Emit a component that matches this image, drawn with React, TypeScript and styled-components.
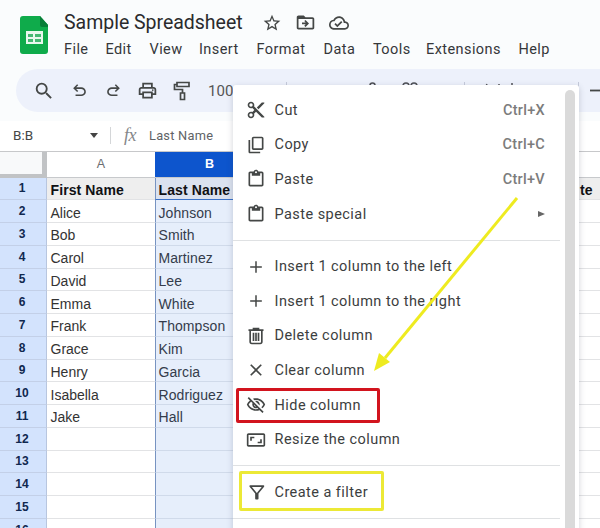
import React from 'react';
import styled, { createGlobalStyle } from 'styled-components';

const Global = createGlobalStyle`
  * { box-sizing: border-box; }
  body { margin: 0; overflow: hidden; background: #f9fbfd; font-family: Roboto, "Liberation Sans", sans-serif; }
`;
const Page = styled.div`position: relative; width: 600px; height: 528px; overflow: hidden; background: #fafcfd; display: flex; flex-direction: column;`;
const Header = styled.header`height: 69px; flex: none; display: flex; padding-left: 20px;`;
const Logo = styled.svg`width: 28px; height: 38px; margin-top: 16px; flex: none;`;
const HeaderText = styled.div`margin-left: 16px; display: flex; flex-direction: column;`;
const TitleRow = styled.div`height: 38px; padding-top: 7px; display: flex; align-items: center;`;
const Title = styled.div`width: 198px; white-space: nowrap; font-size: 19.5px; letter-spacing: -0.02px; color: #2a2b2d;`;
const TitleIcons = styled.div`display: flex; gap: 13px; align-items: center;`;
const MenuBar = styled.nav`display: flex; height: 22px; align-items: center;`;
const MenuName = styled.span<{ $w: number }>`width: ${p => p.$w}px; flex: none; font-size: 14.5px; letter-spacing: 0.42px; color: #35373a; white-space: nowrap;`;
const Toolbar = styled.div`height: 43px; flex: none; margin-left: 16px; padding-left: 17px; border-radius: 22px 0 0 22px; background: #edf1fb; display: flex; align-items: center; color: #444746;`;
const ToolSlot = styled.div<{ $w: number }>`width: ${p => p.$w}px; flex: none; display: flex;`;
const Zoom = styled.span`width: 78px; flex: none; margin-left: 1px; font-size: 15px; letter-spacing: 0.1px; color: #555;`;
const ToolGlyphs = styled.svg`width: 315px; height: 43px; flex: none;`;
const FormulaBar = styled.div`height: 31px; margin-top: 9px; flex: none; display: flex; align-items: center; background: #fff; border-bottom: 1px solid #c7c8ca; padding: 0 0 2px 13px; font-size: 13.5px; color: #444746;`;
const RangeName = styled.span`width: 77px;`;
const Caret = styled.span`width: 0; border: 4.5px solid transparent; border-top: 5px solid #444; border-bottom: 0;`;
const Split = styled.span`width: 1px; height: 17px; margin-left: 12px; background: #d4d6d8;`;
const Fx = styled.span`width: 24px; margin-left: 13px; font: italic 18px "Liberation Serif", serif; letter-spacing: -0.5px; color: #85878a;`;
const FormulaText = styled.span`margin-left: 1px; font-size: 12.8px; letter-spacing: 0.25px; color: #606366;`;
const Sheet = styled.div`flex: none; display: grid; grid-template-columns: 47px 108px 100px 1fr; grid-auto-rows: 22.75px; grid-template-rows: 25.5px; font-family: "Liberation Sans", Arial, sans-serif;`;
const Corner = styled.div`background: #f8f9fa; border-right: 5px solid #c1c3c5; border-bottom: 4px solid #c1c3c5;`;
const ColumnHead = styled.div<{ $active?: boolean }>`display: flex; align-items: center; justify-content: center; font-size: 12.5px; color: ${p => p.$active ? '#fff' : '#6b6d70'}; font-weight: ${p => p.$active ? 700 : 400}; background: ${p => p.$active ? '#0d55cd' : '#fff'}; border-bottom: 1px solid #c7c9cc; padding-left: ${p => p.$active ? 9 : 0}px;`;
const RowHead = styled.div`background: #d3e3fd; border-right: 1px solid #b8c6df; border-bottom: 1px solid #c3d0e8; padding-right: 2px; color: #10284f; font-size: 12px; font-weight: 700; display: flex; align-items: center; justify-content: center;`;
const Cell = styled.div<{ $selected?: boolean; $head?: boolean }>`
  padding-left: ${p => p.$selected ? 2.5 : 3.5}px; padding-top: 3px; display: flex; align-items: center; white-space: nowrap; overflow: hidden;
  font-size: 14px; letter-spacing: ${p => p.$head ? 0.1 : p.$selected ? 0.08 : 0}px; color: ${p => p.$head ? '#101114' : p.$selected ? '#343c4b' : '#333'};
  font-weight: ${p => p.$head ? 700 : 400};
  background: ${p => p.$selected ? (p.$head ? '#dbe2ef' : '#e6eefb') : p.$head ? '#eee' : '#fff'};
  border-bottom: 1px solid ${p => p.$selected ? (p.$head ? '#3a72c8' : '#d0daea') : '#e2e3e5'};
  border-left: ${p => p.$selected ? '1px solid #7793c1' : '0'};
`;
const RestCell = styled(Cell)`padding-left: 325px;`;
const Popup = styled.div`position: absolute; left: 233px; top: 85px; width: 346px; height: 460px; background: #fff; border-radius: 3px; box-shadow: 0 2px 6px rgba(45,55,75,.22); padding-top: 8px;`;
const Item = styled.div`height: 34.6px; display: flex; align-items: center; padding: 0 34px 0 13px; color: #3c3e40; font-size: 14.5px; letter-spacing: .45px;`;
const ItemIcon = styled.span`width: 20px; height: 20px; margin-right: 8.5px; flex: none; display: flex;`;
const Shortcut = styled.span`margin-left: auto; color: #7c7c7c; font-weight: 500; letter-spacing: .3px;`;
const SubArrow = styled.span`margin-left: auto; border: 3.5px solid transparent; border-left: 7px solid #666; border-right: 0;`;
const Rule = styled.div`height: 1px; background: #dfe1e3; margin: 8.5px 19px 8.5px 0;`;
const Scroll = styled.div`position: absolute; right: 4px; top: 5px; bottom: 0; width: 10px; border-radius: 5px; background: #dadada;`;
const Highlight = styled.div<{ $x: number; $y: number; $w: number; $h: number; $c: string }>`position: absolute; left: ${p => p.$x}px; top: ${p => p.$y}px; width: ${p => p.$w}px; height: ${p => p.$h}px; border: 3px solid ${p => p.$c}; border-radius: 2px;`;
const Arrow = styled.svg`position: absolute; left: 370px; top: 192px; width: 154px; height: 184px;`;

const paths: Record<string, string> = {
  star: 'm22 9.24-7.19-.62L12 2 9.19 8.63 2 9.24l5.46 4.73L5.82 21 12 17.27 18.18 21l-1.63-7.03zM12 15.4l-3.76 2.27 1-4.28-3.32-2.88 4.38-.38L12 6.1l1.71 4.04 4.38.38-3.32 2.88 1 4.28z',
  folder: 'M20 6h-8l-2-2H4c-1.1 0-2 .9-2 2v12c0 1.1.9 2 2 2h16c1.1 0 2-.9 2-2V8c0-1.1-.9-2-2-2m0 12H4V8h16zM12 17l4-4-4-4-1.4 1.4 1.6 1.6H8v2h4.2l-1.6 1.6z',
  cloud: 'M19.35 10.04C18.67 6.59 15.64 4 12 4 9.11 4 6.6 5.64 5.35 8.04 2.34 8.36 0 10.91 0 14c0 3.31 2.69 6 6 6h13c2.76 0 5-2.24 5-5 0-2.64-2.05-4.78-4.65-4.96M19 18H6c-2.21 0-4-1.79-4-4 0-2.05 1.53-3.76 3.56-3.97l1.07-.11.5-.95C8.08 7.14 9.94 6 12 6c2.62 0 4.88 1.86 5.39 4.43l.3 1.5 1.53.11c1.56.1 2.78 1.41 2.78 2.96 0 1.65-1.35 3-3 3m-9-3.82-2.09-2.09L6.5 13.5 10 17l6.01-6.01-1.41-1.41z',
  search: 'M15.5 14h-.79l-.28-.27A6.47 6.47 0 0 0 16 9.5 6.5 6.5 0 1 0 9.5 16c1.61 0 3.09-.59 4.23-1.57l.27.28v.79l5 4.99L20.49 19zm-6 0C7.01 14 5 11.99 5 9.5S7.01 5 9.5 5 14 7.01 14 9.5 11.99 14 9.5 14',
  undo: 'M7 19v-2h7.1c1.05 0 1.96-.33 2.74-1 .77-.67 1.16-1.5 1.16-2.5S17.61 11.67 16.84 11c-.78-.67-1.69-1-2.74-1H7.8l2.6 2.6L9 14 4 9l5-5 1.4 1.4L7.8 8h6.3c1.62 0 3 .53 4.16 1.58A5.05 5.05 0 0 1 20 13.5c0 1.57-.58 2.88-1.74 3.93A6 6 0 0 1 14.1 19z',
  print: 'M19 8h-1V3H6v5H5c-1.66 0-3 1.34-3 3v6h4v4h12v-4h4v-6c0-1.66-1.34-3-3-3M8 5h8v3H8zm8 14H8v-4h8zm4-4h-2v-2H6v2H4v-4c0-.55.45-1 1-1h14c.55 0 1 .45 1 1zm-2-2.5a1 1 0 1 0 0-2 1 1 0 0 0 0 2',
  cut: 'M9.64 7.64c.23-.5.36-1.05.36-1.64 0-2.21-1.79-4-4-4S2 3.79 2 6s1.79 4 4 4c.59 0 1.14-.13 1.64-.36L10 12l-2.36 2.36C7.14 14.13 6.59 14 6 14c-2.21 0-4 1.79-4 4s1.79 4 4 4 4-1.79 4-4c0-.59-.13-1.14-.36-1.64L12 14l7 7h3v-1zM6 8c-1.1 0-2-.89-2-2s.9-2 2-2 2 .89 2 2-.9 2-2 2m0 12c-1.1 0-2-.89-2-2s.9-2 2-2 2 .89 2 2-.9 2-2 2M19 3l-6 6 2 2 7-7V3z',
  copy: 'M19 2H9c-1.1 0-2 .9-2 2v12c0 1.1.9 2 2 2h10c1.1 0 2-.9 2-2V4c0-1.1-.9-2-2-2m0 14H9V4h10zM3 6h2v14h12v2H5c-1.1 0-2-.9-2-2z',
  paste: 'M19 3h-4.18C14.4 1.84 13.3 1 12 1s-2.4.84-2.82 2H5c-1.1 0-2 .9-2 2v14c0 1.1.9 2 2 2h14c1.1 0 2-.9 2-2V5c0-1.1-.9-2-2-2m-7-.2a1.2 1.2 0 1 1 0 2.4 1.2 1.2 0 0 1 0-2.4M19 19H5V5h2v3h10V5h2z',
  add: 'M19 12.9h-6.1V19h-1.8v-6.1H5v-1.8h6.1V5h1.8v6.1H19z',
  trash: 'M16 4V2H8v2H3v2h1v13c0 1.7 1 3 3 3h10c2 0 3-1.3 3-3V6h1V4zm2 15c0 .7-.3 1-1 1H7c-.7 0-1-.3-1-1V6h12zM8 8h2v10H8zm3 0h2v10h-2zm3 0h2v10h-2z',
  clear: 'M19 6.41 17.59 5 12 10.59 6.41 5 5 6.41 10.59 12 5 17.59 6.41 19 12 13.41 17.59 19 19 17.59 13.41 12z',
  hide: 'M12 6c3.79 0 7.17 2.13 8.82 5.5-.59 1.22-1.42 2.27-2.41 3.12l1.41 1.41c1.39-1.23 2.49-2.77 3.18-4.53C21.27 7.11 17 4 12 4c-1.27 0-2.49.2-3.64.57l1.65 1.65C10.66 6.09 11.32 6 12 6m-1.07 1.14L13 9.21c.57.25 1.03.71 1.28 1.28l2.07 2.07c.08-.34.14-.7.14-1.07C16.5 9.01 14.48 7 12 7c-.37 0-.72.05-1.07.14M2.01 3.87l2.68 2.68A11.74 11.74 0 0 0 1 11.5C2.73 15.89 7 19 12 19c1.52 0 2.98-.29 4.32-.82l3.42 3.42 1.41-1.41L3.42 2.45zm7.5 7.5 2.61 2.61c-.04.01-.08.02-.12.02a2.5 2.5 0 0 1-2.5-2.5c0-.05.01-.08.01-.13m-3.4-3.4 1.75 1.75a4.6 4.6 0 0 0-.36 1.78 4.5 4.5 0 0 0 6.27 4.14l.98.98c-.88.24-1.8.38-2.75.38-3.79 0-7.17-2.13-8.82-5.5.7-1.43 1.72-2.61 2.93-3.53',
  resize: 'M21 4H3c-1.1 0-2 .9-2 2v12c0 1.1.9 2 2 2h18c1.1 0 2-.9 2-2V6c0-1.1-.9-2-2-2m0 14H3V6h18zM5 8h5v2H7v3H5zm14 8h-5v-2h3v-3h2z',
  filter: 'M5 4h16c.8 0 1.2.9.7 1.6L15 13.8V20c0 .6-.4 1-1 1h-2c-.6 0-1-.4-1-1v-6.2L4.300 5.600C3.800 4.900 4.200 4 5 4m2.100 2L13 13.200 18.900 6z',
};
const Icon = ({ name, size = 20, flip = false }: { name: string; size?: number; flip?: boolean }) => (
  <svg width={size} height={size} viewBox="0 0 24 24" fill="#444746" fillRule="evenodd"><path d={paths[name]} transform={flip ? 'matrix(-1 0 0 1 24 0)' : undefined} /></svg>
);
const menus: [string, number][] = [['File', 41.5], ['Edit', 44], ['View', 49.5], ['Insert', 57.5], ['Format', 67], ['Data', 49.5], ['Tools', 53], ['Extensions', 92.5], ['Help', 40]];
const people = [['First Name', 'Last Name'], ['Alice', 'Johnson'], ['Bob', 'Smith'], ['Carol', 'Martinez'], ['David', 'Lee'], ['Emma', 'White'], ['Frank', 'Thompson'], ['Grace', 'Kim'], ['Henry', 'Garcia'], ['Isabella', 'Rodriguez'], ['Jake', 'Hall'], [], [], [], [], []];
const Action = ({ icon, label, keys, sub }: { icon: string; label: string; keys?: string; sub?: boolean }) => (
  <Item><ItemIcon><Icon name={icon} /></ItemIcon>{label}{keys && <Shortcut>{keys}</Shortcut>}{sub && <SubArrow />}</Item>
);

export default function App() {
  return (
    <Page>
      <Global />
      <Header>
        <Logo viewBox="0 0 28 38"><path d="M3 0h17l8 9v26q0 3-3 3H3q-3 0-3-3V3q0-3 3-3" fill="#0fab4b" /><path d="m20 0 8 9v2h-6q-2 0-2-2z" fill="#087e38" /><path d="M6 15h17v13H6z" fill="#e9f8ee" /><path d="M8 18h5v3H8zm7 0h6v3h-6zm-7 5h5v3H8zm7 0h6v3h-6z" fill="#45b873" /></Logo>
        <HeaderText>
          <TitleRow><Title>Sample Spreadsheet</Title><TitleIcons><Icon name="star" /><Icon name="folder" size={21} /><Icon name="cloud" /></TitleIcons></TitleRow>
          <MenuBar>{menus.map(([label, width]) => <MenuName $w={width} key={label}>{label}</MenuName>)}</MenuBar>
        </HeaderText>
      </Header>
      <Toolbar>
        <ToolSlot $w={37}><Icon name="search" size={22} /></ToolSlot><ToolSlot $w={34}><Icon name="undo" size={19} /></ToolSlot><ToolSlot $w={33}><Icon name="undo" size={19} flip /></ToolSlot><ToolSlot $w={36}><Icon name="print" size={21} /></ToolSlot>
        <ToolSlot $w={34}><svg width="18" height="20" viewBox="0 0 18 20" fill="none" stroke="#444746" strokeWidth="1.7"><path d="M4 1.5h12v4H4zM4 3.5H1.500v5h8V12M7.500 12h4v6.500h-4z" /></svg></ToolSlot>
        <Zoom>100</Zoom>
        <ToolGlyphs viewBox="285 69 315 43" fill="none" stroke="#505257">
          <path d="M285.500 82v18M463.500 82v18M577.500 82v18" stroke="#c5cada" />
          <path d="M303 85.500h4M332 85.500h4m5 0h4M432 85.500h5m3 0h4m3 0h4" stroke="#9a9daa" />
          <circle cx="371.500" cy="85.500" r="2.500" strokeWidth="1.600" /><circle cx="405" cy="86" r="3" strokeWidth="1.600" /><circle cx="413" cy="86" r="3" strokeWidth="1.600" />
          <path d="M485 86l1-2M498 86v-2M511 86v-3" strokeWidth="1.500" />
          <path d="M589 90.500h12" stroke="#444746" strokeWidth="1.800" />
        </ToolGlyphs>
      </Toolbar>
      <FormulaBar><RangeName>B:B</RangeName><Caret /><Split /><Fx>fx</Fx><FormulaText>Last Name</FormulaText></FormulaBar>
      <Sheet>
        <Corner /><ColumnHead>A</ColumnHead><ColumnHead $active>B</ColumnHead><ColumnHead />
        {people.map((p, i) => <React.Fragment key={i}><RowHead>{i + 1}</RowHead><Cell $head={!i}>{p[0]}</Cell><Cell $selected $head={!i}>{p[1]}</Cell><RestCell $head={!i}>{!i && 'te'}</RestCell></React.Fragment>)}
      </Sheet>
      <Popup>
        <Action icon="cut" label="Cut" keys="Ctrl+X" /><Action icon="copy" label="Copy" keys="Ctrl+C" /><Action icon="paste" label="Paste" keys="Ctrl+V" /><Action icon="paste" label="Paste special" sub />
        <Rule />
        <Action icon="add" label="Insert 1 column to the left" /><Action icon="add" label="Insert 1 column to the right" /><Action icon="trash" label="Delete column" /><Action icon="clear" label="Clear column" /><Action icon="hide" label="Hide column" /><Action icon="resize" label="Resize the column" />
        <Rule />
        <Action icon="filter" label="Create a filter" />
        <Rule />
        <Scroll />
      </Popup>
      <Highlight $x={236} $y={388} $w={144} $h={35} $c="#d2141e" />
      <Highlight $x={239} $y={471} $w={145} $h={40} $c="#ece936" />
      <Arrow viewBox="0 0 154 184"><path d="M147 6 15 166" stroke="#eeeb20" strokeWidth="3" /><path d="m4 179 5-18 11 9z" fill="#eeeb20" /></Arrow>
    </Page>
  );
}
